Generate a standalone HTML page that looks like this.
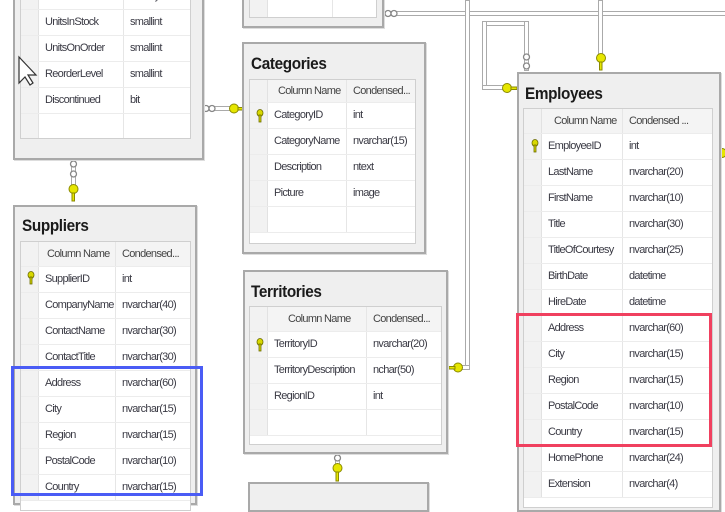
<!DOCTYPE html>
<html><head><meta charset="utf-8"><style>
*{margin:0;padding:0;box-sizing:border-box}
body{width:725px;height:497px;background:#fff;position:relative;overflow:hidden;font-family:"Liberation Sans",sans-serif;font-size:11px;color:#3a3a44}
.a{position:absolute}
.box{position:absolute;background:#efefef;border:2px solid #a9a9a9;box-shadow:1px 1px 0 #ddd}
.ttl{position:absolute;font-weight:bold;font-size:17px;color:#1a1a1a;letter-spacing:-0.4px;transform:scaleX(0.9);transform-origin:left}
.grid{position:absolute;background:#fff;border:1px solid #cfcfcf;overflow:hidden}
.row{position:absolute;left:0;right:0;height:26px;border-bottom:1px solid #ececec;line-height:25px;letter-spacing:-0.7px;white-space:nowrap}
.sel{position:absolute;left:0;top:0;bottom:0;width:18px;background:#f2f2f2;border-right:1px solid #e2e2e2}
.c1{position:absolute;top:0}
.c2{position:absolute;top:0;bottom:0;border-left:1px solid #e6e6e6;padding-left:6px}
.hdr{background:#f4f4f4;color:#444}
.ln{position:absolute;background:#fff;border:1px solid #aaa}
</style></head><body>

<div class="ln" style="left:388px;top:11px;width:340px;height:5px"></div>
<div class="ln" style="left:465px;top:0;width:5px;height:370px"></div>
<div class="ln" style="left:455px;top:365px;width:15px;height:5px"></div>
<div class="ln" style="left:598px;top:0;width:5px;height:55px"></div>
<div class="ln" style="left:482px;top:21px;width:46px;height:5px"></div>
<div class="ln" style="left:482px;top:21px;width:5px;height:69px"></div>
<div class="ln" style="left:482px;top:85px;width:22px;height:5px"></div>
<div class="ln" style="left:524px;top:21px;width:5px;height:50px"></div>
<div class="ln" style="left:203px;top:106px;width:30px;height:5px"></div>
<div class="ln" style="left:71px;top:158px;width:5px;height:30px"></div>
<div class="ln" style="left:335px;top:453px;width:5px;height:15px"></div>

<svg class="a" style="left:0;top:0" width="725" height="497">
<g fill="#fff" stroke="#888" stroke-width="1.3">
<circle cx="388" cy="13.5" r="3"/><circle cx="394" cy="13.5" r="3"/>
<circle cx="206" cy="108.5" r="3"/><circle cx="212" cy="108.5" r="3"/>
<circle cx="73.5" cy="164" r="3"/><circle cx="73.5" cy="174" r="3"/>
<circle cx="526.5" cy="57" r="3"/><circle cx="526.5" cy="66" r="3"/>
<circle cx="337.5" cy="458" r="3"/>
</g>
<g fill="#e6e600" stroke="#8a8a00" stroke-width="1">
<circle cx="234" cy="108.5" r="4.5"/><rect x="238" y="107.5" width="6" height="2.5"/>
<circle cx="73.5" cy="189" r="4.5"/><rect x="72" y="193" width="2.5" height="8"/>
<circle cx="601" cy="58" r="4.5"/><rect x="599.5" y="62" width="2.5" height="8"/>
<circle cx="507" cy="88" r="4.5"/><rect x="511" y="87" width="6" height="2.5"/>
<circle cx="458" cy="367.5" r="4.5"/><rect x="449" y="366.5" width="6" height="2.5"/>
<circle cx="337.5" cy="468" r="4.5"/><rect x="336" y="472" width="2.5" height="9"/>
<circle cx="722" cy="153" r="4.5"/><rect x="712" y="152" width="6" height="2.5"/>
</g>
</svg>

<div class="box" style="left:13px;top:-20px;width:191px;height:180px"></div>
<div class="grid" style="left:20px;top:-17px;width:171px;height:156px">
 <div class="row" style="top:0"><div class="sel"></div><div class="c1" style="left:24px">UnitPrice</div><div class="c2" style="left:102px">money</div></div>
 <div class="row" style="top:26px"><div class="sel"></div><div class="c1" style="left:24px">UnitsInStock</div><div class="c2" style="left:102px">smallint</div></div>
 <div class="row" style="top:52px"><div class="sel"></div><div class="c1" style="left:24px">UnitsOnOrder</div><div class="c2" style="left:102px">smallint</div></div>
 <div class="row" style="top:78px"><div class="sel"></div><div class="c1" style="left:24px">ReorderLevel</div><div class="c2" style="left:102px">smallint</div></div>
 <div class="row" style="top:104px"><div class="sel"></div><div class="c1" style="left:24px">Discontinued</div><div class="c2" style="left:102px">bit</div></div>
 <div class="row" style="top:130px"><div class="sel"></div><div class="c2" style="left:102px"></div></div>
</div>
<svg class="a" style="left:17px;top:55px" width="24" height="34"><path d="M2 2 L2 28 L8 22 L13 30 L16 28 L11 20 L19 20 Z" fill="#fff" stroke="#333" stroke-width="1.2"/></svg>

<div class="box" style="left:242px;top:-20px;width:142px;height:48px"></div>
<div class="grid" style="left:249px;top:-17px;width:128px;height:35px">
 <div class="row" style="top:8px"><div class="sel"></div><div class="c2" style="left:82px"></div></div>
</div>

<div class="box" style="left:13px;top:205px;width:184px;height:300px"></div>
<div class="ttl" style="left:22px;top:216px">Suppliers</div>
<div class="grid" style="left:20px;top:241px;width:171px;height:270px">
 <div class="row hdr" style="top:0;height:25px"><div class="sel"></div><div class="c1" style="left:26px">Column Name</div><div class="c2" style="left:94px">Condensed...</div></div>
 <div class="row" style="top:25px"><div class="sel"></div><div class="c1" style="left:24px">SupplierID</div><div class="c2" style="left:94px">int</div></div>
 <div class="row" style="top:51px"><div class="sel"></div><div class="c1" style="left:24px">CompanyName</div><div class="c2" style="left:94px">nvarchar(40)</div></div>
 <div class="row" style="top:77px"><div class="sel"></div><div class="c1" style="left:24px">ContactName</div><div class="c2" style="left:94px">nvarchar(30)</div></div>
 <div class="row" style="top:103px"><div class="sel"></div><div class="c1" style="left:24px">ContactTitle</div><div class="c2" style="left:94px">nvarchar(30)</div></div>
 <div class="row" style="top:129px"><div class="sel"></div><div class="c1" style="left:24px">Address</div><div class="c2" style="left:94px">nvarchar(60)</div></div>
 <div class="row" style="top:155px"><div class="sel"></div><div class="c1" style="left:24px">City</div><div class="c2" style="left:94px">nvarchar(15)</div></div>
 <div class="row" style="top:181px"><div class="sel"></div><div class="c1" style="left:24px">Region</div><div class="c2" style="left:94px">nvarchar(15)</div></div>
 <div class="row" style="top:207px"><div class="sel"></div><div class="c1" style="left:24px">PostalCode</div><div class="c2" style="left:94px">nvarchar(10)</div></div>
 <div class="row" style="top:233px"><div class="sel"></div><div class="c1" style="left:24px">Country</div><div class="c2" style="left:94px">nvarchar(15)</div></div>
</div>

<div class="box" style="left:242px;top:42px;width:184px;height:212px"></div>
<div class="ttl" style="left:251px;top:54px">Categories</div>
<div class="grid" style="left:249px;top:79px;width:167px;height:165px">
 <div class="row hdr" style="top:0;height:23px;line-height:22px"><div class="sel"></div><div class="c1" style="left:28px">Column Name</div><div class="c2" style="left:96px">Condensed...</div></div>
 <div class="row" style="top:23px"><div class="sel"></div><div class="c1" style="left:24px">CategoryID</div><div class="c2" style="left:96px">int</div></div>
 <div class="row" style="top:49px"><div class="sel"></div><div class="c1" style="left:24px">CategoryName</div><div class="c2" style="left:96px">nvarchar(15)</div></div>
 <div class="row" style="top:75px"><div class="sel"></div><div class="c1" style="left:24px">Description</div><div class="c2" style="left:96px">ntext</div></div>
 <div class="row" style="top:101px"><div class="sel"></div><div class="c1" style="left:24px">Picture</div><div class="c2" style="left:96px">image</div></div>
 <div class="row" style="top:127px"><div class="sel"></div><div class="c2" style="left:96px"></div></div>
</div>

<div class="box" style="left:243px;top:270px;width:205px;height:184px"></div>
<div class="ttl" style="left:251px;top:282px">Territories</div>
<div class="grid" style="left:249px;top:306px;width:193px;height:139px">
 <div class="row hdr" style="top:0;height:25px"><div class="sel"></div><div class="c1" style="left:38px">Column Name</div><div class="c2" style="left:116px">Condensed...</div></div>
 <div class="row" style="top:25px"><div class="sel"></div><div class="c1" style="left:24px">TerritoryID</div><div class="c2" style="left:116px">nvarchar(20)</div></div>
 <div class="row" style="top:51px"><div class="sel"></div><div class="c1" style="left:24px">TerritoryDescription</div><div class="c2" style="left:116px">nchar(50)</div></div>
 <div class="row" style="top:77px"><div class="sel"></div><div class="c1" style="left:24px">RegionID</div><div class="c2" style="left:116px">int</div></div>
 <div class="row" style="top:103px"><div class="sel"></div><div class="c2" style="left:116px"></div></div>
</div>

<div class="box" style="left:248px;top:482px;width:181px;height:30px"></div>

<div class="box" style="left:517px;top:72px;width:204px;height:440px"></div>
<div class="ttl" style="left:525px;top:84px">Employees</div>
<div class="grid" style="left:523px;top:108px;width:190px;height:400px">
 <div class="row hdr" style="top:0;height:25px"><div class="sel"></div><div class="c1" style="left:30px">Column Name</div><div class="c2" style="left:98px">Condensed ...</div></div>
 <div class="row" style="top:25px"><div class="sel"></div><div class="c1" style="left:24px">EmployeeID</div><div class="c2" style="left:98px">int</div></div>
 <div class="row" style="top:51px"><div class="sel"></div><div class="c1" style="left:24px">LastName</div><div class="c2" style="left:98px">nvarchar(20)</div></div>
 <div class="row" style="top:77px"><div class="sel"></div><div class="c1" style="left:24px">FirstName</div><div class="c2" style="left:98px">nvarchar(10)</div></div>
 <div class="row" style="top:103px"><div class="sel"></div><div class="c1" style="left:24px">Title</div><div class="c2" style="left:98px">nvarchar(30)</div></div>
 <div class="row" style="top:129px"><div class="sel"></div><div class="c1" style="left:24px">TitleOfCourtesy</div><div class="c2" style="left:98px">nvarchar(25)</div></div>
 <div class="row" style="top:155px"><div class="sel"></div><div class="c1" style="left:24px">BirthDate</div><div class="c2" style="left:98px">datetime</div></div>
 <div class="row" style="top:181px"><div class="sel"></div><div class="c1" style="left:24px">HireDate</div><div class="c2" style="left:98px">datetime</div></div>
 <div class="row" style="top:207px"><div class="sel"></div><div class="c1" style="left:24px">Address</div><div class="c2" style="left:98px">nvarchar(60)</div></div>
 <div class="row" style="top:233px"><div class="sel"></div><div class="c1" style="left:24px">City</div><div class="c2" style="left:98px">nvarchar(15)</div></div>
 <div class="row" style="top:259px"><div class="sel"></div><div class="c1" style="left:24px">Region</div><div class="c2" style="left:98px">nvarchar(15)</div></div>
 <div class="row" style="top:285px"><div class="sel"></div><div class="c1" style="left:24px">PostalCode</div><div class="c2" style="left:98px">nvarchar(10)</div></div>
 <div class="row" style="top:311px"><div class="sel"></div><div class="c1" style="left:24px">Country</div><div class="c2" style="left:98px">nvarchar(15)</div></div>
 <div class="row" style="top:337px"><div class="sel"></div><div class="c1" style="left:24px">HomePhone</div><div class="c2" style="left:98px">nvarchar(24)</div></div>
 <div class="row" style="top:363px"><div class="sel"></div><div class="c1" style="left:24px">Extension</div><div class="c2" style="left:98px">nvarchar(4)</div></div>
</div>

<svg class="a" style="left:0;top:0" width="725" height="497">
<g fill="#d8d800" stroke="#6a6a00" stroke-width="0.8">
<ellipse cx="31" cy="275" rx="3" ry="3.5"/><rect x="30" y="277" width="2" height="7"/>
<ellipse cx="260" cy="113" rx="3" ry="3.5"/><rect x="259" y="115" width="2" height="7"/>
<ellipse cx="260" cy="342" rx="3" ry="3.5"/><rect x="259" y="344" width="2" height="7"/>
<ellipse cx="535" cy="143" rx="3" ry="3.5"/><rect x="534" y="145" width="2" height="7"/>
</g>
</svg>

<div class="a" style="left:11px;top:366px;width:192px;height:130px;border:3px solid #4a5cf5"></div>
<div class="a" style="left:516px;top:313px;width:196px;height:134px;border:3px solid #f0405f"></div>
</body></html>
